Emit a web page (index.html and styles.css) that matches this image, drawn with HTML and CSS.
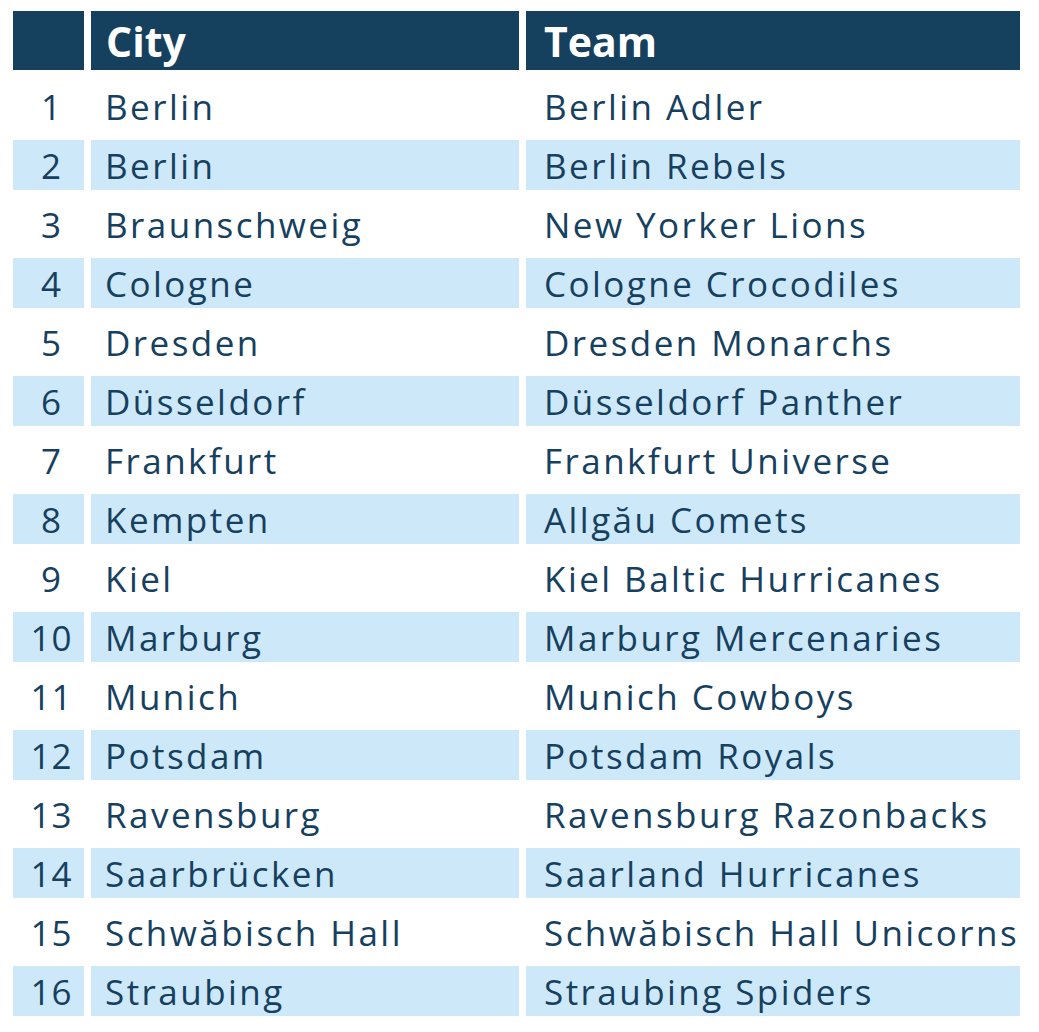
FILE: index.html
```html
<!DOCTYPE html>
<html lang="en">
<head>
<meta charset="utf-8">
<title>Teams</title>
<link rel="stylesheet" href="styles.css">
</head>
<body>
<div class="table">
  <div class="row head">
    <div class="cell num"></div>
    <div class="cell">City</div>
    <div class="cell team">Team</div>
  </div>
  <div class="row"><div class="cell num">1</div><div class="cell">Berlin</div><div class="cell team">Berlin Adler</div></div>
  <div class="row band"><div class="cell num">2</div><div class="cell">Berlin</div><div class="cell team">Berlin Rebels</div></div>
  <div class="row"><div class="cell num">3</div><div class="cell">Braunschweig</div><div class="cell team">New Yorker Lions</div></div>
  <div class="row band"><div class="cell num">4</div><div class="cell">Cologne</div><div class="cell team">Cologne Crocodiles</div></div>
  <div class="row"><div class="cell num">5</div><div class="cell">Dresden</div><div class="cell team">Dresden Monarchs</div></div>
  <div class="row band"><div class="cell num">6</div><div class="cell">Düsseldorf</div><div class="cell team">Düsseldorf Panther</div></div>
  <div class="row"><div class="cell num">7</div><div class="cell">Frankfurt</div><div class="cell team">Frankfurt Universe</div></div>
  <div class="row band"><div class="cell num">8</div><div class="cell">Kempten</div><div class="cell team">Allgău Comets</div></div>
  <div class="row"><div class="cell num">9</div><div class="cell">Kiel</div><div class="cell team">Kiel Baltic Hurricanes</div></div>
  <div class="row band"><div class="cell num">10</div><div class="cell">Marburg</div><div class="cell team">Marburg Mercenaries</div></div>
  <div class="row"><div class="cell num">11</div><div class="cell">Munich</div><div class="cell team">Munich Cowboys</div></div>
  <div class="row band"><div class="cell num">12</div><div class="cell">Potsdam</div><div class="cell team">Potsdam Royals</div></div>
  <div class="row"><div class="cell num">13</div><div class="cell">Ravensburg</div><div class="cell team">Ravensburg Razonbacks</div></div>
  <div class="row band"><div class="cell num">14</div><div class="cell">Saarbrücken</div><div class="cell team">Saarland Hurricanes</div></div>
  <div class="row"><div class="cell num">15</div><div class="cell">Schwăbisch Hall</div><div class="cell team">Schwăbisch Hall Unicorns</div></div>
  <div class="row band"><div class="cell num">16</div><div class="cell">Straubing</div><div class="cell team">Straubing Spiders</div></div>
</div>
</body>
</html>
```
FILE: styles.css
```css
html, body {
  margin: 0;
  padding: 0;
  background: #ffffff;
}
body {
  font-family: "Open Sans", "Noto Sans", sans-serif;
  color: #16405f;
}
.table {
  display: flex;
  flex-direction: column;
  gap: 9px;
  padding: 11px 0 0 13px;
}
.row {
  display: grid;
  grid-template-columns: 71px 428px 494px;
  column-gap: 7px;
  height: 50px;
}
.row.head {
  height: 59px;
  margin-bottom: 2px;
}
.cell {
  display: flex;
  align-items: center;
  padding-left: 14px;
  padding-top: 1px;
  font-size: 35px;
  font-weight: 500;
  letter-spacing: 2.45px;
  white-space: nowrap;
  box-sizing: border-box;
}
.cell.team {
  padding-left: 18px;
}
.cell.num {
  justify-content: center;
  padding-left: 6px;
  letter-spacing: 1px;
}
.head .cell {
  background: #15405e;
  color: #ffffff;
  font-weight: 700;
  font-size: 41px;
  letter-spacing: 0;
  padding-top: 0;
}
.head .cell.team {
  padding-left: 18px;
}
.head .cell:nth-child(2) {
  padding-left: 15px;
}
.band .cell {
  background: #cde8f8;
}
```
